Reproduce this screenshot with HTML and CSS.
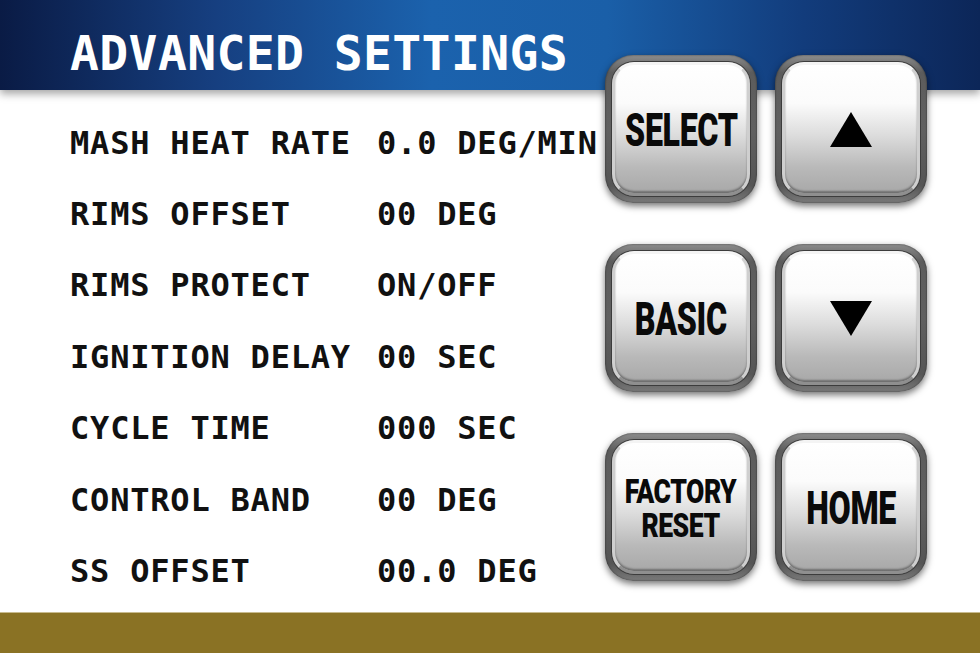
FILE: index.html
```html
<!DOCTYPE html>
<html>
	<head>
		<meta charset="UTF-8">
		<title>Advanced Settings</title>
		<link rel="stylesheet" href="styles.css">
	</head>

	<body>
		<header class="top">
			<h1>ADVANCED SETTINGS</h1>
		</header>

		<main>
			<dl class="settings">
				<dt>MASH HEAT RATE</dt><dd>0.0 DEG/MIN</dd>
				<dt>RIMS OFFSET</dt><dd>00 DEG</dd>
				<dt>RIMS PROTECT</dt><dd>ON/OFF</dd>
				<dt>IGNITION DELAY</dt><dd>00 SEC</dd>
				<dt>CYCLE TIME</dt><dd>000 SEC</dd>
				<dt>CONTROL BAND</dt><dd>00 DEG</dd>
				<dt>SS OFFSET</dt><dd>00.0 DEG</dd>
			</dl>

			<nav class="keys">
				<button class="key"><span class="face"><span class="label">SELECT</span></span></button>
				<button class="key"><span class="face"><span class="arrow up"></span></span></button>
				<button class="key"><span class="face"><span class="label">BASIC</span></span></button>
				<button class="key"><span class="face"><span class="arrow down"></span></span></button>
				<button class="key"><span class="face"><span class="label small">FACTORY<br>RESET</span></span></button>
				<button class="key"><span class="face"><span class="label">HOME</span></span></button>
			</nav>
		</main>

		<footer class="bottom"></footer>
	</body>
</html>
```

FILE: styles.css
```css
html, body {
    margin: 0; padding: 0;
    height: 100%;
}

body {
    font-family: "DejaVu Sans Mono", "Liberation Mono", monospace;
    background: #ffffff;
    display: flex; flex-direction: column;
    overflow: hidden;
}

header.top {
    height: 90px;
    flex: none;
    background: linear-gradient(to right, #0a1b45 0%, #163f80 22%, #1b62ad 44%, #1a5fa8 62%, #123c7c 82%, #0c2658 100%);
    box-shadow: 0 4px 8px rgba(0, 0, 0, .35);
    position: relative;
    z-index: 1;
}

h1 {
    margin: 0;
    padding: 28px 0 0 70px;
    font-size: 48px;
    line-height: 50px;
    font-weight: bold;
    letter-spacing: 0.4px;
    color: #ffffff;
}

main {
    flex: 1;
    display: flex;
    position: relative;
    z-index: 2;
}

dl.settings {
    margin: 17px 0 0 70px;
    display: grid;
    grid-template-columns: 307px auto;
    grid-auto-rows: 71.4px;
    align-items: center;
    align-content: start;
    font-size: 32px;
    font-weight: bold;
    letter-spacing: 0.8px;
    color: #111111;
    white-space: nowrap;
}

dt, dd {
    margin: 0;
}

nav.keys {
    margin: -35px 0 0 auto;
    width: 322px;
    padding-right: 53px;
    display: grid;
    grid-template-columns: 152px 152px;
    grid-template-rows: 148px 148px 148px;
    column-gap: 18px;
    row-gap: 41px;
    align-content: start;
}

button.key {
    width: 152px; height: 148px;
    padding: 7px;
    box-sizing: border-box;
    border: none;
    border-radius: 28px;
    background: linear-gradient(to bottom, #8d8d8d 0%, #5c5c5c 12%, #606060 50%, #555555 88%, #7a7a7a 100%);
    box-shadow: 0 3px 7px rgba(0, 0, 0, .55), inset 0 0 2px rgba(0, 0, 0, .6);
    display: flex;
    cursor: pointer;
}

.face {
    flex: 1;
    min-width: 0;
    overflow: hidden;
    border-radius: 22px;
    border: 3px solid #cfcfcf;
    border-bottom-color: #8f8f8f;
    border-top-color: #f4f4f4;
    box-shadow: inset 0 -2px 2px rgba(0, 0, 0, .35), 0 0 0 1px #3c3c3c;
    background: linear-gradient(to bottom, #ffffff 0%, #fbfbfb 30%, #dcdcdc 55%, #b9b9b9 80%, #a8a8a8 100%);
    display: flex;
    align-items: center;
    justify-content: center;
}

.label {
    flex: none;
    font-family: "Roboto", "Liberation Sans", sans-serif;
    font-weight: 900;
    font-size: 46px;
    line-height: 46px;
    color: #0a0a0a;
    text-align: center;
    white-space: nowrap;
    transform: scaleX(0.7);
    letter-spacing: -0.5px;
    margin-top: 2px;
}

.label.small {
    font-size: 34px;
    line-height: 34px;
    transform: scaleX(0.78);
    letter-spacing: -0.6px;
}

.arrow {
    width: 0; height: 0;
    border-left: 21px solid transparent;
    border-right: 21px solid transparent;
}

.arrow.up {
    border-bottom: 35px solid #000000;
}

.arrow.down {
    border-top: 35px solid #000000;
}

footer.bottom {
    height: 40px;
    flex: none;
    background: #8a7224;
    border-top: 1px solid #c8bb8e;
}
```
